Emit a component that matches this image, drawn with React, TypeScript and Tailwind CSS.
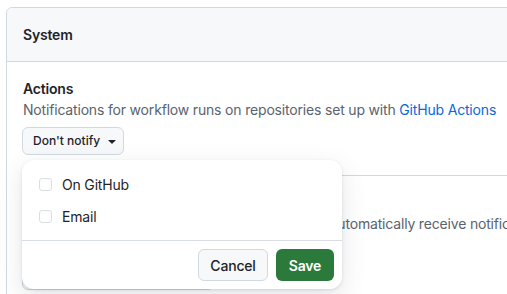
import React from 'react';

function Caret() {
  return (
    <svg width="16" height="16" viewBox="0 0 16 16" className="text-[#1f2328]" fill="currentColor">
      <path d="m4.427 7.427 3.396 3.396a.25.25 0 0 0 .354 0l3.396-3.396A.25.25 0 0 0 11.396 7H4.604a.25.25 0 0 0-.177.427Z" />
    </svg>
  );
}

export default function App() {
  return (
    <div
      className="relative w-[507px] h-[294px] overflow-hidden bg-white text-[#1f2328] tracking-[-0.18px]"
      style={{ fontFamily: 'Inter, "Liberation Sans", sans-serif' }}
    >
      {/* Settings box */}
      <div className="ml-[6px] mt-[7px] w-[540px] h-[320px] border border-[#d1d9e0] rounded-tl-[6px]">
        <div className="h-[54px] flex items-center px-4 bg-[#f6f8fa] border-b border-[#d1d9e0] rounded-tl-[6px]">
          <h2 className="text-[14px] font-semibold">System</h2>
        </div>

        <div className="px-4 pt-4">
          {/* Actions */}
          <div className="pb-5 border-b border-[#d1d9e0]">
            <h3 className="text-[14px] leading-[21px] font-semibold">Actions</h3>
            <p className="text-[14px] leading-[21px] text-[#59636e] whitespace-nowrap">
              Notifications for workflow runs on repositories set up with{' '}
              <a className="text-[#0969da]">GitHub Actions</a>
            </p>
            <button
              type="button"
              className="-ml-px mt-[7px] h-[28px] pl-[10px] pr-[3px] flex items-center gap-1 text-[12px] font-medium tracking-normal bg-[#f6f8fa] border border-[#d1d9e0] rounded-[6px]"
            >
              Don&apos;t notify
              <Caret />
            </button>
          </div>

          {/* Dependabot (mostly under the popover) */}
          <div className="pt-4">
            <h3 className="text-[14px] leading-[21px] font-semibold">Dependabot alerts</h3>
            <p className="text-[14px] leading-[21px] text-[#59636e] whitespace-nowrap">
              When given access to Dependabot alerts you&apos;ll automatically receive notifications
              <br />
              for new vulnerabilities.
            </p>
            <button
              type="button"
              className="-ml-px mt-[7px] w-[192px] h-[28px] px-[10px] flex items-center justify-between text-[12px] font-medium bg-[#f6f8fa] border border-[#d1d9e0] rounded-[6px]"
            >
              On GitHub, Email
              <Caret />
            </button>
          </div>
        </div>
      </div>

      {/* Popover */}
      <div className="absolute left-[22px] top-[160px] w-[320px] bg-white rounded-[12px] shadow-[0_1px_3px_rgba(31,35,40,0.12),0_8px_24px_rgba(66,74,83,0.14)]">
        <div className="py-2">
          {['On GitHub', 'Email'].map((label) => (
            <label key={label} className="h-[32px] flex items-center gap-[10px] pl-[17px] text-[14px]">
              <span className="w-[13px] h-[13px] rounded-[3px] border border-[#d8dee4] bg-white" />
              {label}
            </label>
          ))}
        </div>
        <div className="flex justify-end gap-2 p-2 border-t border-[#d8dee4]">
          <button
            type="button"
            className="h-[32px] w-[70px] text-[14px] font-medium bg-[#f6f8fa] border border-[#d1d9e0] rounded-[6px]"
          >
            Cancel
          </button>
          <button
            type="button"
            className="h-[32px] w-[58px] text-[14px] font-semibold text-white bg-[#2b7a3b] rounded-[6px]"
          >
            Save
          </button>
        </div>
      </div>
    </div>
  );
}
